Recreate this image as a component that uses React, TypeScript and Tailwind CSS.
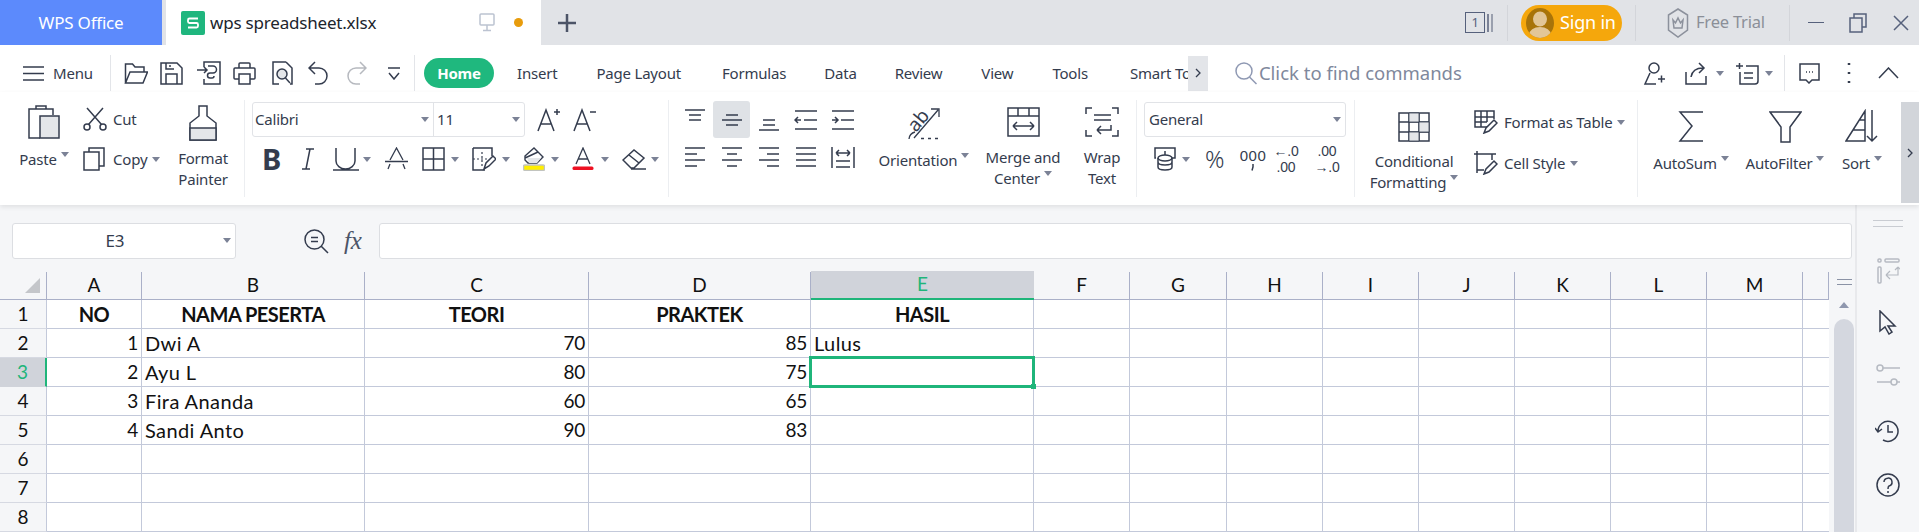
import type { ReactNode } from "react";

const UI = "font-['Noto_Sans',sans-serif] tracking-[-0.2px]";
const SHEET = "font-['Lato',sans-serif]";

function Ico({ w, h, className = "", children }: { w: number; h: number; className?: string; children: ReactNode }) {
  return (
    <svg width={w} height={h} viewBox={`0 0 ${w} ${h}`} fill="none" stroke="currentColor" strokeWidth={1.5} className={`shrink-0 text-[#343c4e] ${className}`}>
      {children}
    </svg>
  );
}

function Caret({ className = "" }: { className?: string }) {
  return (
    <svg width={8} height={5} viewBox="0 0 8 5" className={`shrink-0 ${className}`}>
      <polygon points="0,0 8,0 4,5" fill="#7b8296" />
    </svg>
  );
}

function Sep({ className = "" }: { className?: string }) {
  return <div className={`w-px bg-[#e3e5e9] shrink-0 ${className}`} />;
}

function Tool({ icon, lines, caret, className = "", labelClass = "" }: { icon: ReactNode; lines: string[]; caret?: boolean; className?: string; labelClass?: string }) {
  return (
    <div className={`flex flex-col items-center shrink-0 ${className}`}>
      {icon}
      <div className={`flex flex-col items-center text-[15px] leading-[21px] text-[#343c4e] ${labelClass}`}>
        {lines.map((l, i) => (
          <div key={l} className="flex items-start whitespace-nowrap">
            {l}
            {caret && i === lines.length - 1 && <Caret className="ml-[4px] mt-[3px]" />}
          </div>
        ))}
      </div>
    </div>
  );
}

function TitleBar() {
  return (
    <div className={`flex h-[45px] bg-[#e1e3e7] items-stretch ${UI}`}>
      <div className="w-[162px] bg-[#5c8afc] text-white text-[17px] flex items-center justify-center">WPS Office</div>
      <div className="w-[375px] ml-[4px] bg-white flex items-center pl-[15px]">
        <svg width={24} height={24} viewBox="0 0 24 24" className="shrink-0">
          <rect width={24} height={24} rx={2} fill="#1fb67e" />
          <path d="M17 7.5H8.5a1.5 1.5 0 0 0-1.5 1.5v1.5A1.5 1.5 0 0 0 8.5 12h7a1.5 1.5 0 0 1 1.5 1.5v1.5a1.5 1.5 0 0 1-1.5 1.5H7" stroke="#fff" strokeWidth={1.8} fill="none" />
        </svg>
        <span className="ml-[5px] w-[167px] text-[17px] text-[#20242c] whitespace-nowrap">wps spreadsheet.xlsx</span>
        <Ico w={16} h={19} className="ml-[102px] !text-[#bcc3d1]">
          <rect x={1} y={1} width={14} height={11} rx={1} />
          <path d="M8 12v5M4 17.5h8" />
        </Ico>
        <div className="w-[9px] h-[9px] rounded-full bg-[#e89c0c] ml-[19px]" />
      </div>
      <div className="flex items-center ml-[17px]">
        <svg width={18} height={18} viewBox="0 0 18 18" stroke="#4c5467" strokeWidth={2.5}>
          <path d="M9 0v18M0 9h18" />
        </svg>
      </div>
      <div className="flex-1" />
      <div className="flex items-center pr-[10px]">
        <div className="flex items-center">
          <div className="w-[20px] h-[21px] border-[1.5px] border-[#56617c] text-[13px] leading-[18px] text-center text-[#56617c]">1</div>
          <div className="w-[2px] h-[18px] bg-[#7b8296] ml-[2px]" />
          <div className="w-[2px] h-[18px] bg-[#9aa0ae] ml-[2px]" />
        </div>
        <Sep className="h-[36px] ml-[14px] !bg-[#d3d5da]" />
        <div className="w-[101px] h-[36px] ml-[13px] rounded-[18px] bg-[#f5a70c] flex items-center pl-[5px]">
          <svg width={28} height={30} viewBox="0 0 28 30" className="shrink-0">
            <clipPath id="av"><ellipse cx={14} cy={15} rx={14} ry={15} /></clipPath>
            <ellipse cx={14} cy={15} rx={14} ry={15} fill="#a8740a" />
            <g clipPath="url(#av)" fill="#e2c697">
              <ellipse cx={14} cy={11} rx={7} ry={7.5} />
              <ellipse cx={14} cy={27} rx={11} ry={8} />
            </g>
          </svg>
          <span className="ml-[6px] text-[18px] text-white whitespace-nowrap">Sign in</span>
        </div>
        <Sep className="h-[36px] ml-[13px] !bg-[#d3d5da]" />
        <Ico w={22} h={30} className="ml-[31px] !text-[#8c919c]">
          <path d="M11 1l9.5 6v15L11 29l-9.5-7V7z" />
          <path d="M6 12l2.5 3L11 10l2.5 5L16 12l-1 8H7z" />
        </Ico>
        <span className="ml-[7px] text-[16.5px] text-[#8b8f98] whitespace-nowrap w-[70px]">Free Trial</span>
        <Sep className="h-[36px] ml-[23px] !bg-[#d3d5da]" />
        <div className="w-[16px] h-[1.5px] bg-[#56617c] ml-[18px]" />
        <Ico w={18} h={20} className="ml-[25px] !text-[#56617c]">
          <path d="M5 5V1h12v13h-4" />
          <rect x={1} y={5} width={12} height={14} />
        </Ico>
        <Ico w={16} h={16} className="ml-[26px] !text-[#56617c]">
          <path d="M1 1l14 14M15 1L1 15" />
        </Ico>
      </div>
    </div>
  );
}

const TABS: [string, string][] = [
  ["Insert", "ml-[23px]"],
  ["Page Layout", "ml-[39px]"],
  ["Formulas", "ml-[41px]"],
  ["Data", "ml-[38px]"],
  ["Review", "ml-[38px]"],
  ["View", "ml-[39px]"],
  ["Tools", "ml-[39px]"],
];

function MenuRow() {
  return (
    <div className={`flex h-[47px] pt-[9px] items-center bg-white text-[#343c4e] text-[15px] ${UI}`}>
      <Ico w={21} h={15} className="ml-[23px]">
        <path d="M0 1h21M0 7.5h21M0 14h21" />
      </Ico>
      <span className="ml-[9px] w-[40px]">Menu</span>
      <Sep className="h-[36px] ml-[17px]" />
      <Ico w={24} h={23} className="ml-[13px]">
        <path d="M1.5 21V2h7l2.5 3h9v5M1.5 21L6 10h17.5l-4.5 11z" />
      </Ico>
      <Ico w={23} h={23} className="ml-[12px]">
        <path d="M1 1h16l5 5v16H1zM6 22v-10h11v10M6 1v6h8M9 4h2" />
      </Ico>
      <Ico w={24} h={24} className="ml-[14px]">
        <path d="M7 6V1h16v22H7v-5M0 9h9M7 6l3 3-3 3M11 5h5a3 3 0 0 1 0 7h-3a2.5 2.5 0 0 0 0 5h2a2 2 0 0 0 2-2" />
      </Ico>
      <Ico w={23} h={23} className="ml-[12px]">
        <path d="M6 6V2a1 1 0 0 1 1-1h9a1 1 0 0 1 1 1v4M6 17H2a1 1 0 0 1-1-1V7a1 1 0 0 1 1-1h19a1 1 0 0 1 1 1v9a1 1 0 0 1-1 1h-4M6 12h11v10H6z" />
      </Ico>
      <Ico w={21} h={24} className="ml-[16px]">
        <path d="M14 1H1v22h6M14 1l6 6v16h-2" />
        <circle cx={10} cy={13} r={5} fill="#e4e6e9" />
        <path d="M13.5 17l4.5 5" />
      </Ico>
      <Ico w={20} h={24} className="ml-[15px]">
        <path d="M7 1L1 7l6 6M1 7h10a8 8 0 0 1 0 16H7" />
      </Ico>
      <Ico w={20} h={24} className="ml-[19px] !text-[#b6b9bf]">
        <path d="M13 1l6 6-6 6M19 7H9a8 8 0 0 0 0 16h4" />
      </Ico>
      <Ico w={12} h={14} className="ml-[21px]">
        <path d="M0 2h12M1 7l5 6 5-6" />
      </Ico>
      <Sep className="h-[36px] ml-[14px]" />
      <div className="ml-[9px] w-[70px] h-[30px] rounded-[15px] bg-[#1fb87e] text-white font-bold text-[15px] flex items-center justify-center">Home</div>
      {TABS.map(([t, m]) => (
        <span key={t} className={`whitespace-nowrap ${m}`}>{t}</span>
      ))}
      <span className="ml-[42px] w-[58px] overflow-hidden whitespace-nowrap">Smart Tools</span>
      <div className="w-[20px] h-[35px] bg-[#e3e5e9] flex items-center justify-center">
        <svg width={6} height={10} viewBox="0 0 6 10" fill="none" stroke="#343c4e" strokeWidth={1.3}>
          <path d="M1 1l4 4-4 4" />
        </svg>
      </div>
      <Ico w={22} h={23} className="ml-[27px] !text-[#8f99b3]">
        <circle cx={9} cy={9} r={8} />
        <path d="M14.5 15l7 7" />
      </Ico>
      <span className="ml-[2px] text-[18.5px] text-[#7f889c] whitespace-nowrap tracking-normal">Click to find commands</span>
      <div className="flex-1" />
      <Ico w={22} h={23}>
        <circle cx={11} cy={6} r={5} />
        <path d="M7 11L2 22h11M15 17h7M18.5 13.5v7" />
      </Ico>
      <Ico w={23} h={23} className="ml-[20px]">
        <path d="M1 10v12h20v-8M6 15c1-6 5-9 12-9M14 1l5 5-5 5" />
      </Ico>
      <Caret className="ml-[8px]" />
      <Ico w={23} h={23} className="ml-[12px]">
        <path d="M0 4h7M3.5 1v6M10 4h12v15a3 3 0 0 1-3 3H4v-12M8 11h9M8 16h9" />
      </Ico>
      <Caret className="ml-[6px]" />
      <Sep className="h-[36px] ml-[11px]" />
      <Ico w={21} h={21} className="ml-[14px]">
        <path d="M1 1h19v16h-7l-3 3-3-3H1z" />
        <path d="M7 9h1M10 9h1M13 9h1" />
      </Ico>
      <Ico w={4} h={22} className="ml-[27px]">
        <path d="M2 1v2M2 10v2M2 19v2" strokeWidth={2.5} />
      </Ico>
      <Ico w={21} h={12} className="ml-[27px] mr-[20px]">
        <path d="M1 11L10.5 1 20 11" />
      </Ico>
    </div>
  );
}

function AlignIcon({ d, w = 22, h = 22 }: { d: string; w?: number; h?: number }) {
  return (
    <Ico w={w} h={h}>
      <path d={d} />
    </Ico>
  );
}

const ALIGN = [
  "M1 1h20M5 6h12M5 11h12",
  "M1 11h20M5 6h12M5 16h12",
  "M1 21h20M5 16h12M5 11h12",
  "M1 2h22M10 11h13M1 20h22M1 11h6M4 8l-3 3 3 3",
  "M1 2h22M10 11h13M1 20h22M1 11h6M4 8l3 3-3 3",
  "M1 2h20M1 8h12M1 14h20M1 20h12",
  "M1 2h20M6 8h10M1 14h20M6 20h10",
  "M1 2h20M9 8h12M1 14h20M9 20h12",
  "M1 2h20M1 8h20M1 14h20M1 20h20",
  "M1 1v21M23 1v21M5 15h14M5 21h14M5 7h14M5 7l3-3M5 7l3 3M19 7l-3-3M19 7l-3 3",
];

function Ribbon() {
  return (
    <div className={`relative z-10 flex h-[113px] bg-white shadow-[0_2px_5px_rgba(0,0,0,0.09)] ${UI}`}>
      {/* clipboard */}
      <div className="w-[245px] flex border-r border-[#eceef1] my-[8px] shrink-0">
        <Tool
          className="w-[60px] ml-[14px] pt-[5px]"
          labelClass="mt-[10px]"
          caret
          lines={["Paste"]}
          icon={
            <Ico w={32} h={34}>
              <path d="M12 33H1V4h24v6M8 4V1h10v3z" />
              <rect x={12} y={11} width={19} height={22} fill="#e4e6e9" />
            </Ico>
          }
        />
        <div className="w-[90px] ml-[9px] pt-[7px] flex flex-col">
          <div className="flex items-center h-[24px] text-[15px] text-[#343c4e]">
            <Ico w={24} h={24}>
              <circle cx={4} cy={20} r={3} />
              <circle cx={20} cy={20} r={3} />
              <path d="M5.5 17.5L20 1M18.5 17.5L4 1" />
            </Ico>
            <span className="ml-[6px]">Cut</span>
          </div>
          <div className="flex items-center h-[24px] mt-[16px] text-[15px] text-[#343c4e]">
            <Ico w={22} h={24}>
              <path d="M6 5V1h15v18h-5M1 5h15v18H1z" />
            </Ico>
            <span className="ml-[8px]">Copy</span>
            <Caret className="ml-[5px]" />
          </div>
        </div>
        <Tool
          className="w-[60px] pt-[5px]"
          labelClass="mt-[7px]"
          lines={["Format", "Painter"]}
          icon={
            <Ico w={28} h={36}>
              <path d="M10 1h8v10l9 7v17H1V18l9-7z" />
              <rect x={1} y={23} width={26} height={12} fill="#e4e6e9" />
            </Ico>
          }
        />
      </div>

      {/* font */}
      <div className="w-[424px] border-r border-[#eceef1] my-[8px] shrink-0 pl-[7px] pt-[2px]">
        <div className="flex items-center">
          <div className="flex w-[273px] h-[35px] border border-[#e1e3e7] rounded-[3px] text-[15px] text-[#343c4e] items-center">
            <div className="w-[181px] h-full flex items-center pl-[2px] pr-[4px] border-r border-[#e1e3e7] justify-between">
              Calibri
              <Caret />
            </div>
            <div className="flex-1 flex items-center pl-[3px] pr-[4px] justify-between">
              11
              <Caret />
            </div>
          </div>
          <Ico w={24} h={24} className="ml-[12px]">
            <path d="M1 23L9 2l8 21M4 16h10M17 4h6M20 1v6" />
          </Ico>
          <Ico w={24} h={24} className="ml-[12px]">
            <path d="M1 23L9 2l8 21M4 16h10M17 4h6" />
          </Ico>
        </div>
        <div className="flex items-center mt-[9px] h-[26px]">
          <span className="ml-[10px] w-[24px] text-[29px] font-bold text-[#343c4e] leading-[26px]">B</span>
          <Ico w={14} h={22} className="ml-[15px]">
            <path d="M5 1h8M1 21h8M9 1L5 21" />
          </Ico>
          <Ico w={26} h={24} className="ml-[18px]">
            <path d="M3 1v13a9.5 8 0 0 0 19 0V1M0 23h26" />
          </Ico>
          <Caret className="ml-[4px]" />
          <Ico w={23} h={24} className="ml-[14px]">
            <path d="M5 13L11.5 1 18 13M0 14.5h23M3 22l2-5M20 22l-2-5" strokeWidth={1.3} />
          </Ico>
          <Ico w={23} h={24} className="ml-[14px]">
            <rect x={1} y={1} width={21} height={22} />
            <path d="M11.5 1v22M1 12h21" />
          </Ico>
          <Caret className="ml-[6px]" />
          <Ico w={24} h={24} className="ml-[13px]">
            <path d="M1 1h19v8M1 1v22h12" />
            <path d="M1 12h14M10 5v14" strokeDasharray="2 2" strokeWidth={1.2} />
            <path d="M12 22l2-6 7-7 3 3-7 7z" />
          </Ico>
          <Caret className="ml-[6px]" />
          <svg width={22} height={24} viewBox="0 0 22 24" fill="none" stroke="#343c4e" strokeWidth={1.4} className="ml-[13px] shrink-0">
            <path d="M2 9l9-8 9 9-6 6H5l-3-3zM2 11l13-6" />
            <path d="M4 11h14l-4 5H6z" fill="#e4e6e9" stroke="none" />
            <rect x={0.5} y={18} width={21} height={5.5} rx={1.5} fill="#ffee00" stroke="#c2c4bf" />
          </svg>
          <Caret className="ml-[6px]" />
          <svg width={22} height={24} viewBox="0 0 22 24" fill="none" stroke="#343c4e" strokeWidth={1.3} className="ml-[13px] shrink-0">
            <path d="M4 17L11 1l7 16M6 12h10" />
            <rect x={0.5} y={19.5} width={21} height={3.5} rx={1.5} fill="#ee1122" stroke="none" />
          </svg>
          <Caret className="ml-[7px]" />
          <Ico w={25} h={22} className="ml-[13px]">
            <path d="M1 12L12 2l10 8-10 10H9zM7 7l10 8M9 21h15" />
          </Ico>
          <Caret className="ml-[4px]" />
        </div>
      </div>

      {/* alignment */}
      <div className="w-[468px] flex border-r border-[#eceef1] my-[8px] shrink-0 pl-[7px]">
        <div className="grid grid-cols-[repeat(5,37px)] auto-rows-[37px] h-[74px] mt-[1px]">
          {ALIGN.map((d, i) => (
            <div key={d} className={`flex items-center justify-center rounded-[3px] ${i === 1 ? "bg-[#dfe2e6]" : ""}`}>
              <AlignIcon d={d} w={i === 3 || i === 4 || i === 9 ? 24 : 22} />
            </div>
          ))}
        </div>
        <Tool
          className="w-[90px] ml-[18px] pt-[6px]"
          labelClass="mt-[10px]"
          caret
          lines={["Orientation"]}
          icon={
            <Ico w={34} h={34}>
              <text x={0} y={0} transform="translate(9 27) rotate(-50)" fontSize={19} fill="currentColor" stroke="none" fontFamily="Noto Sans">ab</text>
              <path d="M7 32L31 4M24 3h8v8" strokeWidth={1.3} />
              <path d="M14 32.5h3M21 32.5h3M28 32.5h3M2 33a8 8 0 0 1 6-7" strokeWidth={1.3} />
            </Ico>
          }
        />
        <Tool
          className="w-[90px] ml-[9px] pt-[7px]"
          labelClass="mt-[10px]"
          caret
          lines={["Merge and", "Center"]}
          icon={
            <Ico w={33} h={30}>
              <rect x={1} y={1} width={31} height={28} />
              <path d="M1 9h31M11 1v8M22 1v8M6 19h21M6 19l4-4M6 19l4 4M27 19l-4-4M27 19l-4 4" />
            </Ico>
          }
        />
        <Tool
          className="w-[50px] ml-[9px] pt-[7px]"
          labelClass="mt-[10px]"
          lines={["Wrap", "Text"]}
          icon={
            <Ico w={34} h={30}>
              <path d="M7 1H1v6M27 1h6v6M1 23v6h6M33 23v6h-6M9 8h17M9 13h17M26 18v5H12M12 23l4-4M12 23l4 4" />
            </Ico>
          }
        />
      </div>

      {/* number */}
      <div className="w-[218px] border-r border-[#eceef1] my-[8px] shrink-0 pl-[7px] pt-[2px]">
        <div className="flex w-[202px] h-[35px] border border-[#e1e3e7] rounded-[3px] text-[15px] text-[#343c4e] items-center justify-between pl-[4px] pr-[4px]">
          General
          <Caret />
        </div>
        <div className="flex items-center mt-[9px] h-[26px] text-[#343c4e]">
          <Ico w={22} h={24} className="ml-[10px]">
            <path d="M2 11H1V1h20v10h-3M11 4v4" />
            <ellipse cx={11} cy={11} rx={7} ry={3} />
            <path d="M4 11v9c0 4 14 4 14 0v-9M4 15c0 4 14 4 14 0" />
          </Ico>
          <Caret className="ml-[6px]" />
          <span className="ml-[15px] w-[22px] text-[24px] leading-[26px] font-light">%</span>
          <div className="ml-[13px] w-[26px] flex flex-col items-center">
            <span className="text-[15px] leading-[17px] tracking-[0.5px] font-['Liberation_Sans',sans-serif]">000</span>
            <svg width={4} height={7} viewBox="0 0 4 7" className="shrink-0">
              <path d="M2 0v3L1 6.5" stroke="#343c4e" strokeWidth={1.5} fill="none" />
            </svg>
          </div>
          <div className="ml-[4px] w-[32px] text-[14px] leading-[16px] text-center font-['Liberation_Sans',sans-serif]">
            <div>←.0</div>
            <div>.00</div>
          </div>
          <div className="ml-[12px] w-[26px] text-[14px] leading-[16px] text-center font-['Liberation_Sans',sans-serif]">
            <div>.00</div>
            <div>→.0</div>
          </div>
        </div>
      </div>

      {/* styles */}
      <div className="w-[283px] flex border-r border-[#eceef1] my-[8px] shrink-0">
        <Tool
          className="w-[100px] ml-[9px] pt-[12px]"
          labelClass="mt-[9px]"
          caret
          lines={["Conditional", "Formatting"]}
          icon={
            <Ico w={32} h={30}>
              <rect x={1} y={1} width={30} height={28} />
              <path d="M1 10h30M1 20h30M11 1v28M21 1v9M11 10h10v10H11zM21 20v9" />
              <path d="M11 1h10v9h-10zM21 10h10v10H21zM11 20h10v9H11z" fill="#e4e6e9" strokeWidth={0.8} />
            </Ico>
          }
        />
        <div className="w-[160px] ml-[10px] pt-[10px] text-[15px] text-[#343c4e]">
          <div className="flex items-center h-[24px]">
            <Ico w={24} h={24}>
              <path d="M13 17H1V1h19v8M1 7h19M1 12h12M7 1v16M13 1v11" />
              <path d="M10 23l2-5 8-8 3 3-8 8z" />
            </Ico>
            <span className="ml-[6px] whitespace-nowrap">Format as Table</span>
            <Caret className="ml-[5px]" />
          </div>
          <div className="flex items-center h-[24px] mt-[17px]">
            <Ico w={24} h={24}>
              <path d="M0 3h22M3 0v22M18 3v6M3 19h7" />
              <path d="M10 23l2-5 8-8 3 3-8 8z" />
            </Ico>
            <span className="ml-[6px] whitespace-nowrap">Cell Style</span>
            <Caret className="ml-[5px]" />
          </div>
        </div>
      </div>

      {/* editing */}
      <div className="flex my-[8px] flex-1">
        <Tool
          className="w-[80px] ml-[13px] pt-[11px]"
          labelClass="mt-[11px]"
          caret
          lines={["AutoSum"]}
          icon={
            <Ico w={26} h={31}>
              <path d="M25 1H2l12 14L2 30h23" />
            </Ico>
          }
        />
        <Tool
          className="w-[80px] ml-[14px] pt-[11px]"
          labelClass="mt-[10px]"
          caret
          lines={["AutoFilter"]}
          icon={
            <Ico w={33} h={32}>
              <path d="M1 1h31L21 16v15h-9V16z" />
            </Ico>
          }
        />
        <Tool
          className="w-[44px] ml-[15px] pt-[9px]"
          labelClass="mt-[10px]"
          caret
          lines={["Sort"]}
          icon={
            <Ico w={34} h={34}>
              <path d="M1 32L20 2v30zM8 21h12M14 11h6M27 1v31M22 27l5 5 5-5" />
            </Ico>
          }
        />
        <div className="flex-1" />
        <div className="w-[18px] mt-[2px] h-[101px] bg-[#d2d5da] flex items-center justify-center">
          <svg width={6} height={10} viewBox="0 0 6 10" fill="none" stroke="#343c4e" strokeWidth={1.3}>
            <path d="M1 1l4 4-4 4" />
          </svg>
        </div>
      </div>
    </div>
  );
}

function FormulaBar() {
  return (
    <div className={`flex h-[67px] pt-[18px] pl-[12px] pr-[3px] items-start ${UI}`}>
      <div className="relative w-[224px] h-[36px] bg-white border border-[#dcdee2] rounded-[3px] text-[17px] text-[#343c4e] flex items-center justify-center">
        <span className="mr-[18px]">E3</span>
        <Caret className="absolute right-[4px] top-[14px]" />
      </div>
      <Ico w={25} h={25} className="ml-[68px] mt-[6px]">
        <circle cx={10.5} cy={10.5} r={9.5} />
        <path d="M17 17l7 7M7 8.5h7M7 12.5h7" />
      </Ico>
      <span className="ml-[15px] mt-[1px] italic text-[25px] leading-[34px] text-[#4c5467] font-['Liberation_Serif',serif]">fx</span>
      <div className="flex-1 ml-[17px] h-[36px] bg-white border border-[#dcdee2] rounded-[3px]" />
    </div>
  );
}

const COLS = ["A", "B", "C", "D", "E", "F", "G", "H", "I", "J", "K", "L", "M", ""];

type Cell = { t: string; a?: "r" | "c"; b?: boolean };
const DATA: Record<number, Cell[]> = {
  1: [{ t: "NO", a: "c", b: true }, { t: "NAMA PESERTA", a: "c", b: true }, { t: "TEORI", a: "c", b: true }, { t: "PRAKTEK", a: "c", b: true }, { t: "HASIL", a: "c", b: true }],
  2: [{ t: "1", a: "r" }, { t: "Dwi A" }, { t: "70", a: "r" }, { t: "85", a: "r" }, { t: "Lulus" }],
  3: [{ t: "2", a: "r" }, { t: "Ayu L" }, { t: "80", a: "r" }, { t: "75", a: "r" }],
  4: [{ t: "3", a: "r" }, { t: "Fira Ananda" }, { t: "60", a: "r" }, { t: "65", a: "r" }],
  5: [{ t: "4", a: "r" }, { t: "Sandi Anto" }, { t: "90", a: "r" }, { t: "83", a: "r" }],
};

function Sheet() {
  return (
    <div className="flex flex-1 min-h-0">
      <div className={`relative w-[1829px] shrink-0 ${SHEET} text-[19px] text-[#111]`}>
        <div className="grid grid-cols-[47px_95px_223px_224px_222px_223px_96px_97px_96px_96px_96px_96px_96px_96px_26px] grid-rows-[28px_repeat(8,29px)]">
          <div className="border-b border-r border-[#aab0c8] flex items-end justify-end pr-[6px] pb-[6px]">
            <svg width={15} height={15} viewBox="0 0 15 15"><polygon points="15,0 15,15 0,15" fill="#c4c6ca" /></svg>
          </div>
          {COLS.map((c, i) => (
            <div
              key={c + i}
              className={`flex items-center justify-center ${c === "E" ? "-mt-px bg-[#d0d3da] text-[#1fb57a] border-b-2 border-[#1fb57a]" : "border-r border-b border-[#aab0c8]"}`}
            >
              {c}
            </div>
          ))}
          {[1, 2, 3, 4, 5, 6, 7, 8].map((r) => (
            <Row key={r} r={r} />
          ))}
        </div>
        {/* active cell */}
        <div className="absolute left-[809px] top-[84px] w-[226px] h-[32px] border-[3px] border-[#1fb57a]">
          <div className="absolute -right-[4px] -bottom-[4px] w-[5px] h-[5px] bg-[#1fb57a]" />
        </div>
      </div>
      <div className="w-[26px] ml-auto flex flex-col items-stretch pl-[4px]">
        <div className="h-[20px] flex flex-col items-center justify-center gap-[4px]">
          <div className="w-[15px] h-px bg-[#8b93a6]" />
          <div className="w-[15px] h-px bg-[#8b93a6]" />
        </div>
        <div className="flex-1 flex flex-col items-center">
          <svg width={10} height={6} viewBox="0 0 10 6" className="mt-[10px]"><polygon points="5,0 10,6 0,6" fill="#8f97ae" /></svg>
          <div className="w-[20px] flex-1 mt-[11px] rounded-t-[10px] bg-[#d4d7df]" />
        </div>
      </div>
    </div>
  );
}

function Row({ r }: { r: number }) {
  const cells = DATA[r] ?? [];
  const active = r === 3;
  return (
    <>
      <div className={`flex items-center justify-center border-b ${active ? "bg-[#d0d3da] text-[#1fb57a] border-r-2 border-r-[#1fb57a] border-b-[#d0d3da]" : "border-r border-r-[#c3c9da] border-b-[#d6d9e2]"}`}>
        {r}
      </div>
      {COLS.map((_, i) => {
        const cell = cells[i];
        const numeric = cell?.a === "r";
        return (
          <div
            key={i}
            className={`flex items-center bg-white whitespace-nowrap border-b border-[#c3c9da] ${i === COLS.length - 1 ? "" : "border-r"} ${
              numeric ? "justify-end pr-[3px] text-[19px] tracking-[-0.3px]" : cell?.a === "c" ? "justify-center text-[20px] tracking-[-0.5px]" : "pl-[3px] text-[20px] tracking-[0.4px]"
            } ${cell?.b ? "font-bold" : ""}`}
          >
            {cell?.t}
          </div>
        );
      })}
    </>
  );
}

function SideRail() {
  return (
    <div className="w-[64px] shrink-0 border-l-2 border-[#e8e9ec] flex flex-col items-center pt-[15px]">
      <div className="w-[30px] h-[7px] border-y border-[#c9ccd2]" />
      <Ico w={23} h={27} className="mt-[31px] !text-[#b6bac2]">
        <rect x={1} y={1} width={3} height={3} rx={1} />
        <rect x={8} y={1} width={14} height={3} rx={1} />
        <rect x={1} y={9} width={3} height={16} rx={1} />
        <path d="M21 9v8h-12M9 17l4-4M9 17l4 4M21 9l-3 3M21 9l3 3" strokeWidth={1.2} />
      </Ico>
      <Ico w={19} h={25} className="mt-[25px]">
        <path d="M1 1v20l5-4 4 7 3-2-4-6h7z" />
      </Ico>
      <Ico w={25} h={22} className="mt-[29px] !text-[#b6bac2]">
        <circle cx={4} cy={4} r={3} />
        <path d="M7 4h17M1 18h14M21 18h3" />
        <circle cx={18} cy={18} r={3} />
      </Ico>
      <Ico w={26} h={26} className="mt-[32px]">
        <path d="M3 13A10 10 0 1 1 8 22M13 7v7h5M0 10l3 4 4-3" />
      </Ico>
      <Ico w={24} h={24} className="mt-[29px]">
        <circle cx={12} cy={12} r={11} />
        <path d="M8 9a4 4 0 1 1 5 4c-1 .5-1 1-1 3M12 18v2" />
      </Ico>
    </div>
  );
}

export default function App() {
  return (
    <div className="w-[1919px] h-[532px] overflow-hidden flex flex-col bg-[#f5f6f8]">
      <TitleBar />
      <MenuRow />
      <Ribbon />
      <div className="flex flex-1 min-h-0">
        <div className="flex-1 min-w-0 flex flex-col">
          <FormulaBar />
          <Sheet />
        </div>
        <SideRail />
      </div>
    </div>
  );
}
